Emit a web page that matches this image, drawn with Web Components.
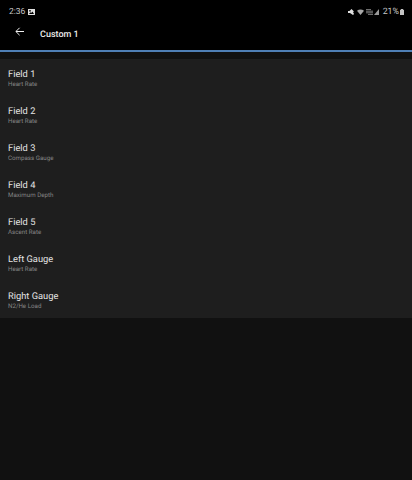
<!DOCTYPE html>
<html>
<head>
<meta charset="utf-8">
<style>
  html, body { margin: 0; height: 100%; background: #111111; }
  body { font-family: Roboto, "Noto Sans", sans-serif; overflow: hidden; text-rendering: geometricPrecision; }
</style>
</head>
<body>
<app-screen>
  <status-bar slot="top" time="2:36" battery="21%"></status-bar>
  <title-bar slot="top" heading="Custom 1"></title-bar>
  <field-row name="Field 1" value="Heart Rate"></field-row>
  <field-row name="Field 2" value="Heart Rate"></field-row>
  <field-row name="Field 3" value="Compass Gauge"></field-row>
  <field-row name="Field 4" value="Maximum Depth"></field-row>
  <field-row name="Field 5" value="Ascent Rate"></field-row>
  <field-row name="Left Gauge" value="Heart Rate"></field-row>
  <field-row name="Right Gauge" value="N2/He Load"></field-row>
</app-screen>
<script>
class AppScreen extends HTMLElement {
  constructor() {
    super();
    this.attachShadow({ mode: 'open' });
    this.shadowRoot.innerHTML = `
      <style>
        :host { display: flex; flex-direction: column; height: 480px; background: #111111; }
        .list { display: flex; flex-direction: column; background: #1e1e1e; margin-top: 7px; }
      </style>
      <slot name="top"></slot>
      <div class="list"><slot></slot></div>
    `;
  }
}

class StatusBar extends HTMLElement {
  constructor() {
    super();
    this.attachShadow({ mode: 'open' });
    this.shadowRoot.innerHTML = `
      <style>
        :host { display: flex; align-items: center; height: 24px; padding: 0 8px 0 9px; background: #000; color: #c8c8c8; font-size: 8.5px; }
        svg { display: block; }
        .pic { margin-left: 3px; }
        .right { margin-left: auto; display: flex; align-items: center; }
        .pct { font-size: 8.8px; margin: 0 1px 0 4px; }
      </style>
      <span class="time">${this.getAttribute('time')}</span>
      <svg class="pic" width="7" height="6" viewBox="0 0 7 6"><path fill="#e0e0e0" fill-rule="evenodd" d="M0 0h7v6H0zM1 5h5L4.4 2.6 3.2 4 2.3 3.2zM2 1a.8.8 0 1 0 .01 0z"/></svg>
      <div class="right">
        <svg width="6" height="6" viewBox="0 0 6 6"><path fill="#e0e0e0" d="M0 2h1.5L3.5 0 6 2.5 5 3l1 2-1 1-3-2H0z"/></svg>
        <svg style="margin-left:3px" width="7" height="6" viewBox="0 0 7 6"><path fill="#a8a8a8" d="M0 1.8Q3.5-.8 7 1.8L3.5 6z"/></svg>
        <svg style="margin-left:2px" width="7" height="6" viewBox="0 0 7 6"><path fill="none" stroke="#999" stroke-width=".8" d="M0 .6h5M0 2.2h7M0 3.8h7M2 5.4h5"/></svg>
        <svg style="margin-left:1px" width="5" height="6" viewBox="0 0 5 6"><path fill="#999" d="M5 0v6H0z"/></svg>
        <span class="pct">${this.getAttribute('battery')}</span>
        <svg width="4" height="6" viewBox="0 0 4 6"><path fill="#c4c4c4" d="M1 0h2v.8h1V6H0V.8h1z"/></svg>
      </div>
    `;
  }
}

class TitleBar extends HTMLElement {
  constructor() {
    super();
    this.attachShadow({ mode: 'open' });
    this.shadowRoot.innerHTML = `
      <style>
        :host { display: flex; align-items: center; height: 20px; padding-bottom: 6px; background: #000; color: #ececec; border-bottom: 2px solid #4f7fb5; }
        .back { width: 25px; padding-left: 15px; margin-top: -5px; }
        h1 { margin: 0; font-size: 9px; font-weight: 500; padding-top: 1px; }
        svg { display: block; }
      </style>
      <div class="back">
        <svg width="9" height="9" viewBox="0 0 9 9"><path fill="none" stroke="#f0f0f0" stroke-width="1" d="M9 4.5H1M4.6.8L.9 4.5l3.7 3.7"/></svg>
      </div>
      <h1>${this.getAttribute('heading')}</h1>
    `;
  }
}

class FieldRow extends HTMLElement {
  constructor() {
    super();
    this.attachShadow({ mode: 'open' });
    this.shadowRoot.innerHTML = `
      <style>
        :host { display: flex; flex-direction: column; height: 37px; padding-left: 8px; box-sizing: border-box; padding-top: 10px; }
        .name { font-size: 9.3px; line-height: 11px; color: #e4e4e4; }
        .value { font-size: 6.2px; line-height: 7px; color: #858585; margin-top: 1px; }
      </style>
      <div class="name">${this.getAttribute('name')}</div>
      <div class="value">${this.getAttribute('value')}</div>
    `;
  }
}

customElements.define('app-screen', AppScreen);
customElements.define('status-bar', StatusBar);
customElements.define('title-bar', TitleBar);
customElements.define('field-row', FieldRow);
</script>
</body>
</html>
